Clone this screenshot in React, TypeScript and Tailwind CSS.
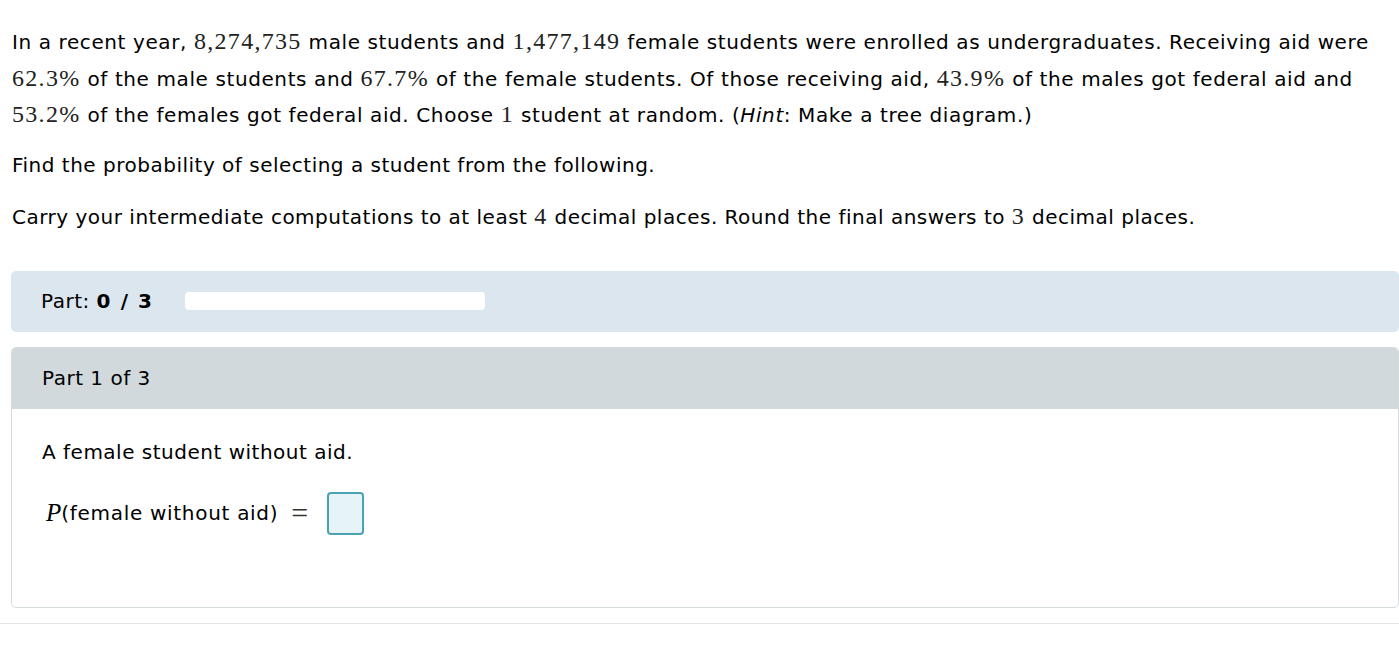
import React from "react";

const M = ({ children }: { children: React.ReactNode }) => (
  <span className="font-['Liberation_Serif',serif] text-[24px] tracking-[1.3px] text-[#222]">{children}</span>
);

export default function App() {
  return (
    <div className="w-full min-h-screen bg-white font-['DejaVu_Sans',Verdana,sans-serif] text-[20px] tracking-[0.5px] text-black">
      <div className="pl-[11px] pt-[24px]">
        <p className="pl-px leading-[35.5px] tracking-[0.6px]">
          In a recent year, <M>8,274,735</M> male students and <M>1,477,149</M> female students were enrolled as
          undergraduates. Receiving aid were
          <br />
          <M>62.3%</M> of the male students and <M>67.7%</M> of the female students. Of those receiving aid,{" "}
          <M>43.9%</M> of the males got federal aid and
          <br />
          <M>53.2%</M> of the females got federal aid. Choose <M>1</M> student at random. (<i>Hint</i>: Make a tree
          diagram.)
        </p>
        <p className="pl-px mt-[13px] leading-[36px]">Find the probability of selecting a student from the following.</p>
        <p className="pl-px mt-[15px] leading-[36px]">
          Carry your intermediate computations to at least <M>4</M> decimal places. Round the final answers to <M>3</M>{" "}
          decimal places.
        </p>

        <div className="mt-[36px] h-[61px] rounded-[5px] bg-[#dbe6ef] flex items-center pl-[30px]">
          <span>
            Part: <b className="tracking-[1.6px]">0 / 3</b>
          </span>
          <div className="ml-[31px] w-[300px] h-[18px] rounded-[4px] bg-white" />
        </div>

        <div className="mt-[15px] h-[261px] rounded-[5px] border border-[#d4dcdd] overflow-hidden">
          <div className="h-[61px] bg-[#d1d9dc] flex items-center pl-[30px]">Part 1 of 3</div>
          <div className="pl-[30px] pt-[28px]">
            <div className="leading-[30px]">A female student without aid.</div>
            <div className="mt-[25px] flex items-center">
              <span className="pl-[4px] font-['Liberation_Serif',serif] italic text-[25px] tracking-normal">P</span>
              <span className="tracking-[0.7px]">(female without aid)</span>
              <span className="ml-[13px] mr-[18px] font-['Liberation_Serif',serif] text-[30px] leading-none text-[#333]">
                =
              </span>
              <div className="w-[37px] h-[43px] rounded-[4px] border-2 border-[#4aa3b3] bg-[#e6f4f8]" />
            </div>
          </div>
        </div>
      </div>
      <div className="mt-[15px] border-t border-[#e3e3e3]" />
    </div>
  );
}
